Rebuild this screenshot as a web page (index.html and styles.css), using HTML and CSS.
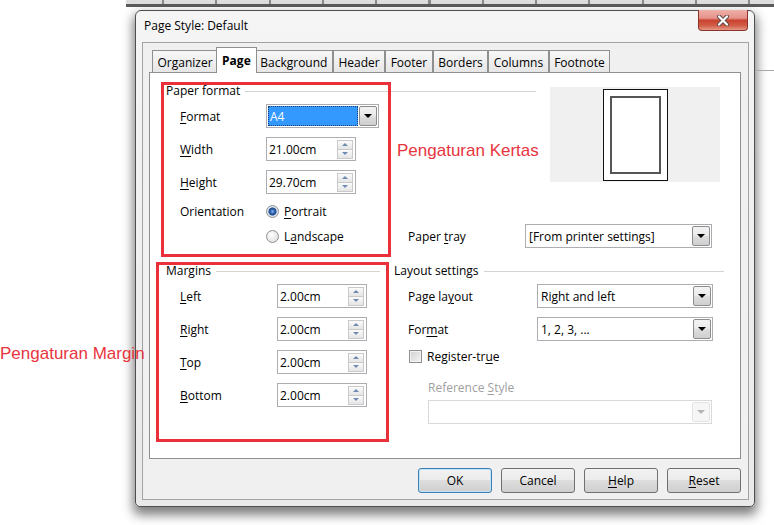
FILE: index.html
```html
<!DOCTYPE html>
<html lang="en">
<head>
    <meta charset="UTF-8">
    <title>Page Style: Default</title>
    <link rel="stylesheet" href="styles.css">
</head>
<body>
    <!-- window behind the dialog -->
    <div class="back-window"></div>
    <div class="back-line"></div>

    <div class="dialog">
        <div class="titlebar">
            <div class="title">Page Style: Default</div>
            <div class="close">
                <svg width="14" height="11" viewBox="0 0 14 11">
                    <path d="M3 1.5 L11 9.5 M11 1.5 L3 9.5" stroke="#5a4a48" stroke-width="4" stroke-linecap="round"/>
                    <path d="M3 1.5 L11 9.5 M11 1.5 L3 9.5" stroke="#ffffff" stroke-width="2.2" stroke-linecap="round"/>
                </svg>
            </div>
        </div>

        <div class="client">
            <!-- Tabs -->
            <div class="tabs">
                <div class="tab">Organizer</div>
                <div class="tab active">Page</div>
                <div class="tab">Background</div>
                <div class="tab">Header</div>
                <div class="tab">Footer</div>
                <div class="tab">Borders</div>
                <div class="tab">Columns</div>
                <div class="tab">Footnote</div>
            </div>

            <div class="panel">
                <!-- Paper format -->
                <div class="top">
                    <div class="legend paper-legend"><span>Paper format</span></div>

                    <div class="fields">
                        <div class="row">
                            <span class="label"><u>F</u>ormat</span>
                            <div class="combo focus format-combo">
                                <span class="val"><span class="sel">A4</span></span>
                                <span class="drop"></span>
                            </div>
                        </div>
                        <div class="row">
                            <span class="label"><u>W</u>idth</span>
                            <div class="spin">
                                <span class="num">21.00cm</span>
                                <span class="arrows"><i class="up"></i><i class="down"></i></span>
                            </div>
                        </div>
                        <div class="row">
                            <span class="label"><u>H</u>eight</span>
                            <div class="spin">
                                <span class="num">29.70cm</span>
                                <span class="arrows"><i class="up"></i><i class="down"></i></span>
                            </div>
                        </div>
                        <div class="radio-row first">
                            <span class="label">Orientation</span>
                            <span class="radio on"></span>
                            <span class="txt"><u>P</u>ortrait</span>
                        </div>
                        <div class="radio-row">
                            <span class="label"></span>
                            <span class="radio"></span>
                            <span class="txt">L<u>a</u>ndscape</span>
                        </div>
                    </div>

                    <div class="preview">
                        <div class="page"><div class="page-inner"></div></div>
                    </div>

                    <div class="tray">
                        <span class="label">Paper <u>t</u>ray</span>
                        <div class="combo tray-combo">
                            <span class="val">[From printer settings]</span>
                            <span class="drop"></span>
                        </div>
                    </div>
                </div>

                <div class="bottom">
                    <!-- Margins -->
                    <div class="margins">
                        <div class="legend"><span>Margins</span></div>
                        <div class="list">
                            <div class="row">
                                <span class="label"><u>L</u>eft</span>
                                <div class="spin"><span class="num">2.00cm</span><span class="arrows"><i class="up"></i><i class="down"></i></span></div>
                            </div>
                            <div class="row">
                                <span class="label"><u>R</u>ight</span>
                                <div class="spin"><span class="num">2.00cm</span><span class="arrows"><i class="up"></i><i class="down"></i></span></div>
                            </div>
                            <div class="row">
                                <span class="label"><u>T</u>op</span>
                                <div class="spin"><span class="num">2.00cm</span><span class="arrows"><i class="up"></i><i class="down"></i></span></div>
                            </div>
                            <div class="row">
                                <span class="label"><u>B</u>ottom</span>
                                <div class="spin"><span class="num">2.00cm</span><span class="arrows"><i class="up"></i><i class="down"></i></span></div>
                            </div>
                        </div>
                    </div>

                    <!-- Layout settings -->
                    <div class="layout">
                        <div class="legend"><span>Layout settings</span></div>
                        <div class="list">
                            <div class="row">
                                <span class="label">Page la<u>y</u>out</span>
                                <div class="combo layout-combo">
                                    <span class="val">Right and left</span>
                                    <span class="drop"></span>
                                </div>
                            </div>
                            <div class="row">
                                <span class="label">For<u>m</u>at</span>
                                <div class="combo layout-combo">
                                    <span class="val">1, 2, 3, ...</span>
                                    <span class="drop"></span>
                                </div>
                            </div>
                            <div class="check-row">
                                <span class="checkbox"></span>
                                <span class="txt">Register-tr<u>u</u>e</span>
                            </div>
                            <div class="ref-label">Reference <u>S</u>tyle</div>
                            <div class="combo disabled">
                                <span class="val"></span>
                                <span class="drop"></span>
                            </div>
                        </div>
                    </div>
                </div>
            </div>

            <!-- Dialog buttons -->
            <div class="buttons">
                <button class="btn default">OK</button>
                <button class="btn">Cancel</button>
                <button class="btn"><u>H</u>elp</button>
                <button class="btn"><u>R</u>eset</button>
            </div>
        </div>
    </div>

    <!-- Annotations -->
    <div class="mark mark-paper"></div>
    <div class="mark mark-margins"></div>
    <div class="note note-kertas">Pengaturan Kertas</div>
    <div class="note note-margin">Pengaturan Margin</div>
</body>
</html>
```

FILE: styles.css
```css
* {
    margin: 0;
    padding: 0;
    box-sizing: border-box;
}

body {
    width: 774px;
    height: 525px;
    overflow: hidden;
    position: relative;
    background-color: #ffffff;
    font-family: "Open Sans", sans-serif;
    font-size: 12px;
    line-height: 16px;
    color: #000;
}

u {
    text-decoration-thickness: 1px;
    text-underline-offset: 2px;
}

/* Window behind */
.back-window {
    height: 7px;
    margin-left: 126px;
    background: repeating-linear-gradient(90deg, transparent 0 36px, #8a8a8a 36px 38px, transparent 38px 53.3px), #dedede;
    border-bottom: 3px solid #5c5c5c;
}

.back-line {
    position: absolute;
    left: 757px;
    top: 70px;
    width: 17px;
    height: 1px;
    background-color: #a8a8a8;
}

/* Dialog frame */
.dialog {
    width: 620px;
    height: 497px;
    margin: 3px 0 0 135px;
    border: 1px solid #4f4f4f;
    border-radius: 6px 6px 5px 5px;
    background: linear-gradient(#f5f5f5, #e9e9e9);
    box-shadow: 0 6px 11px 2px rgba(0,0,0,0.5);
    padding: 0 5px 6px 6px;
}

.titlebar {
    height: 31px;
    display: flex;
    align-items: flex-start;
}

.title {
    padding: 7px 0 0 2px;
}

.close {
    margin: -1px 1px 0 auto;
    width: 50px;
    height: 21px;
    border: 1px solid #8a3429;
    border-top: none;
    border-radius: 0 0 4px 4px;
    background: linear-gradient(#eeb0a8, #e5928a 40%, #c9432f 52%, #d25d47 78%, #e59a88);
    display: flex;
    align-items: center;
    justify-content: center;
}

.client {
    height: 458px;
    border: 1px solid #a3a3a3;
    background-color: #f0f0f0;
    padding: 4px 7px 0 6px;
}

/* Tabs */
.tabs {
    display: flex;
    align-items: flex-end;
    height: 26px;
    margin-left: 3px;
    margin-bottom: -1px;
    position: relative;
    z-index: 1;
}

.tab {
    height: 22px;
    margin-bottom: 1px;
    padding: 4px 4.5px 0;
    border: 1px solid #8e8f8f;
    border-bottom: none;
    background: linear-gradient(#f7f7f7, #e6e6e6);
    white-space: nowrap;
}

.tab.active {
    height: 26px;
    margin: 0 -2px;
    padding: 5px 5px 0;
    background: #ffffff;
    font-weight: bold;
    position: relative;
}

.panel {
    height: 387px;
    border: 1px solid #8e8f8f;
    background-color: #ffffff;
    padding: 9px 0 0 16px;
}

/* Group headers */
.legend {
    display: flex;
    align-items: center;
    gap: 5px;
    height: 16px;
    white-space: nowrap;
}

.legend span {
    padding-top: 2px;
}

.legend::after {
    content: '';
    flex: 1;
    height: 1px;
    margin-top: 2px;
    background-color: #d3d3d3;
}

/* text sits 1px lower in its row, as in the native dialog */
.label,
.val,
.num,
.txt {
    padding-top: 2px;
}

/* Paper format block */
.top {
    display: grid;
    grid-template-columns: 242px 142px 170px;
    grid-template-rows: 16px 84px auto;
    grid-template-areas:
        "legend legend preview"
        "fields . preview"
        "fields tray tray";
}

.paper-legend {
    grid-area: legend;
    margin-right: 14px;
}

.fields {
    grid-area: fields;
    padding: 6px 0 0 14px;
    display: flex;
    flex-direction: column;
}

.row {
    display: flex;
    align-items: center;
    height: 24px;
    flex-shrink: 0;
}

.fields .row + .row {
    margin-top: 9px;
}

.fields .label {
    width: 86px;
}

.radio-row {
    display: flex;
    align-items: center;
    height: 20px;
    margin-top: 5px;
}

.radio-row.first {
    margin-top: 7px;
}

.radio {
    width: 13px;
    height: 13px;
    border-radius: 50%;
    border: 1px solid #8e8f8f;
    background: radial-gradient(circle at 40% 35%, #ffffff, #d8d8d8);
    margin-right: 5px;
}

.radio.on {
    background: radial-gradient(circle, #7fb0ef 0, #2a5aa6 2.5px, #1d4a8e 3.5px, #d6e0ec 4.5px, #f3f3f3 6px);
}

.preview {
    grid-area: preview;
    margin-top: 5px;
    height: 95px;
    background-color: #f0f0f0;
    display: flex;
    justify-content: center;
    padding-top: 2px;
}

.page {
    width: 65px;
    height: 92px;
    border: 1px solid #111;
    background-color: #ffffff;
    padding: 6px;
}

.page-inner {
    height: 100%;
    border: 2px solid #555;
}

.tray {
    grid-area: tray;
    align-self: end;
    margin-bottom: -2px;
    display: flex;
    align-items: center;
    height: 24px;
}

.tray .label {
    width: 117px;
}

/* Combo boxes */
.combo {
    height: 24px;
    border: 1px solid #abadb3;
    background-color: #ffffff;
    display: flex;
    align-items: center;
    padding: 0 1px 0 3px;
}

.combo .val {
    flex: 1;
    white-space: nowrap;
}

.drop {
    width: 18px;
    height: 20px;
    border: 1px solid #8d8d8d;
    border-radius: 2px;
    background: linear-gradient(#f3f3f3, #ebebeb 45%, #dcdcdc 55%, #cfcfcf);
    display: flex;
    align-items: center;
    justify-content: center;
}

.drop::before {
    content: '';
    border-left: 4px solid transparent;
    border-right: 4px solid transparent;
    border-top: 4px solid #000;
}

.format-combo {
    width: 113px;
    padding-left: 1px;
}

.format-combo .val {
    height: 20px;
    padding-top: 0;
    margin-right: 1px;
    background-color: #3399ff;
    outline: 1px dotted #1a3f70;
    outline-offset: -1px;
}

.format-combo .sel {
    display: block;
    padding: 1px 0 0 2px;
    line-height: 20px;
    color: #ffffff;
}

.tray-combo {
    width: 187px;
}

.layout-combo {
    width: 176px;
}

.combo.disabled {
    width: 284px;
    margin: 4px 0 0 20px;
    border-color: #d9d9d9;
}

.combo.disabled .drop {
    border-color: #e3e3e3;
    background: #f6f6f6;
}

.combo.disabled .drop::before {
    border-top-color: #b5b5b5;
}

/* Spin fields */
.spin {
    width: 90px;
    height: 24px;
    border: 1px solid #abadb3;
    background-color: #ffffff;
    display: flex;
    align-items: center;
    justify-content: space-between;
    padding: 0 2px;
}

.arrows {
    width: 16px;
    height: 19px;
    display: flex;
    flex-direction: column;
}

.arrows i {
    flex: 1;
    border: 1px solid #c9c9c9;
    background: linear-gradient(#fbfbfb, #e5e5e5);
    display: flex;
    align-items: center;
    justify-content: center;
}

.arrows i + i {
    border-top: none;
}

.up::before,
.down::before {
    content: '';
    border-left: 3px solid transparent;
    border-right: 3px solid transparent;
}

.up::before {
    border-bottom: 3px solid #6f8bb0;
}

.down::before {
    border-top: 3px solid #6f8bb0;
}

/* Margins + Layout */
.bottom {
    display: flex;
    gap: 14px;
    margin-top: 16px;
}

.margins {
    width: 214px;
}

.layout {
    width: 330px;
}

.list {
    padding: 6px 0 0 14px;
    display: flex;
    flex-direction: column;
}

.list .row + .row {
    margin-top: 9px;
}

.margins .label {
    width: 97px;
}

.layout .label {
    width: 129px;
}

.check-row {
    display: flex;
    align-items: center;
    height: 14px;
    margin-top: 8px;
    padding-left: 1px;
}

.checkbox {
    width: 13px;
    height: 13px;
    border: 1px solid #8e8f8f;
    background: linear-gradient(135deg, #cfcfcf, #f6f6f6);
    box-shadow: inset 0 0 0 1px #f2f2f2;
    margin-right: 5px;
}

.ref-label {
    margin-top: 17px;
    padding-left: 20px;
    color: #a0a0a0;
}

/* Buttons */
.buttons {
    display: flex;
    justify-content: flex-end;
    gap: 9px;
    margin-top: 9px;
}

.btn {
    width: 74px;
    height: 25px;
    border: 1px solid #707070;
    border-radius: 3px;
    background: linear-gradient(#f2f2f2, #ebebeb 50%, #dddddd 50%, #cfcfcf);
    font: inherit;
    color: #000;
}

.btn.default {
    border-color: #3c7fb1;
    box-shadow: inset 0 0 0 1px #bfe4f7;
}

/* Annotations */
.mark {
    position: absolute;
    border: 3px solid #ea313b;
}

.mark-paper {
    left: 161px;
    top: 82px;
    width: 230px;
    height: 175px;
}

.mark-margins {
    left: 156px;
    top: 262px;
    width: 233px;
    height: 180px;
}

.note {
    position: absolute;
    font-family: "Liberation Sans", Arial, sans-serif;
    font-size: 17px;
    line-height: 20px;
    color: #e8343e;
    white-space: nowrap;
}

.note-kertas {
    left: 397px;
    top: 141px;
}

.note-margin {
    left: 0;
    top: 344px;
}
```
